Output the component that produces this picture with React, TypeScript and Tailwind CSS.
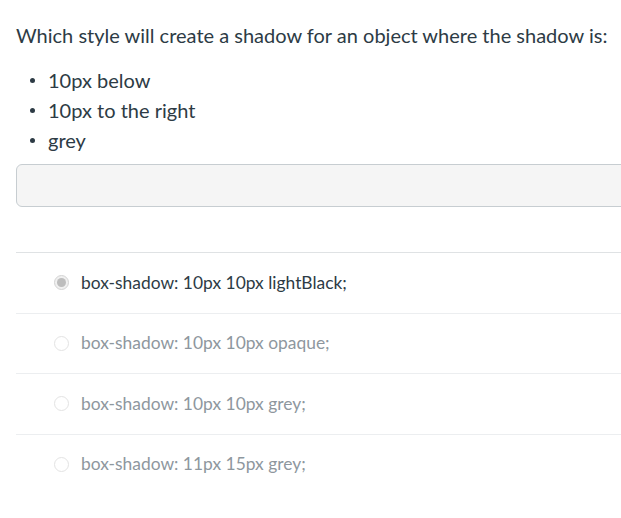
import React from "react";

const options = [
  { label: "box-shadow: 10px 10px lightBlack;", selected: true },
  { label: "box-shadow: 10px 10px opaque;", selected: false },
  { label: "box-shadow: 10px 10px grey;", selected: false },
  { label: "box-shadow: 11px 15px grey;", selected: false },
];

const bullets = ["10px below", "10px to the right", "grey"];

function Radio({ selected }: { selected: boolean }) {
  if (selected) {
    return (
      <span className="flex h-[15px] w-[15px] items-center justify-center rounded-full border border-[#d4d4d4] bg-[#f0f0f0]">
        <span className="h-[9px] w-[9px] rounded-full bg-[#bdbdbd]" />
      </span>
    );
  }
  return <span className="h-[15px] w-[15px] rounded-full border border-[#e3e3e3] bg-white" />;
}

export default function App() {
  return (
    <div
      className="min-h-[518px] overflow-hidden bg-white pl-4 text-[#2d3b45]"
      style={{ fontFamily: "Lato, 'Open Sans', sans-serif" }}
    >
      <p className="pt-5 text-[20px] leading-[30px]">
        Which style will create a shadow for an object where the shadow is:
      </p>
      <ul className="mt-[15px] text-[20px] leading-[30px]">
        {bullets.map((b) => (
          <li key={b} className="flex items-center">
            <span className="ml-[14px] mr-[13px] h-[5px] w-[5px] rounded-full bg-[#2d3b45]" />
            {b}
          </li>
        ))}
      </ul>
      <div className="mt-[9px] -mr-4 h-[43px] rounded-l-md border border-[#c7cdd1] bg-[#f5f5f5]" />
      <div className="mt-[45px]">
        {options.map((opt, i) => (
          <div
            key={opt.label}
            className={
              "flex h-[60.5px] items-center border-t " +
              (i === 0 ? "border-[#dfe2e4]" : "border-[#eceef0]")
            }
          >
            <div className="flex w-[65px] justify-end pr-[12px]">
              <Radio selected={opt.selected} />
            </div>
            <span
              className={
                "text-[17.4px] " + (opt.selected ? "text-[#2d3b45]" : "text-[#8e979e]")
              }
            >
              {opt.label}
            </span>
          </div>
        ))}
      </div>
    </div>
  );
}
